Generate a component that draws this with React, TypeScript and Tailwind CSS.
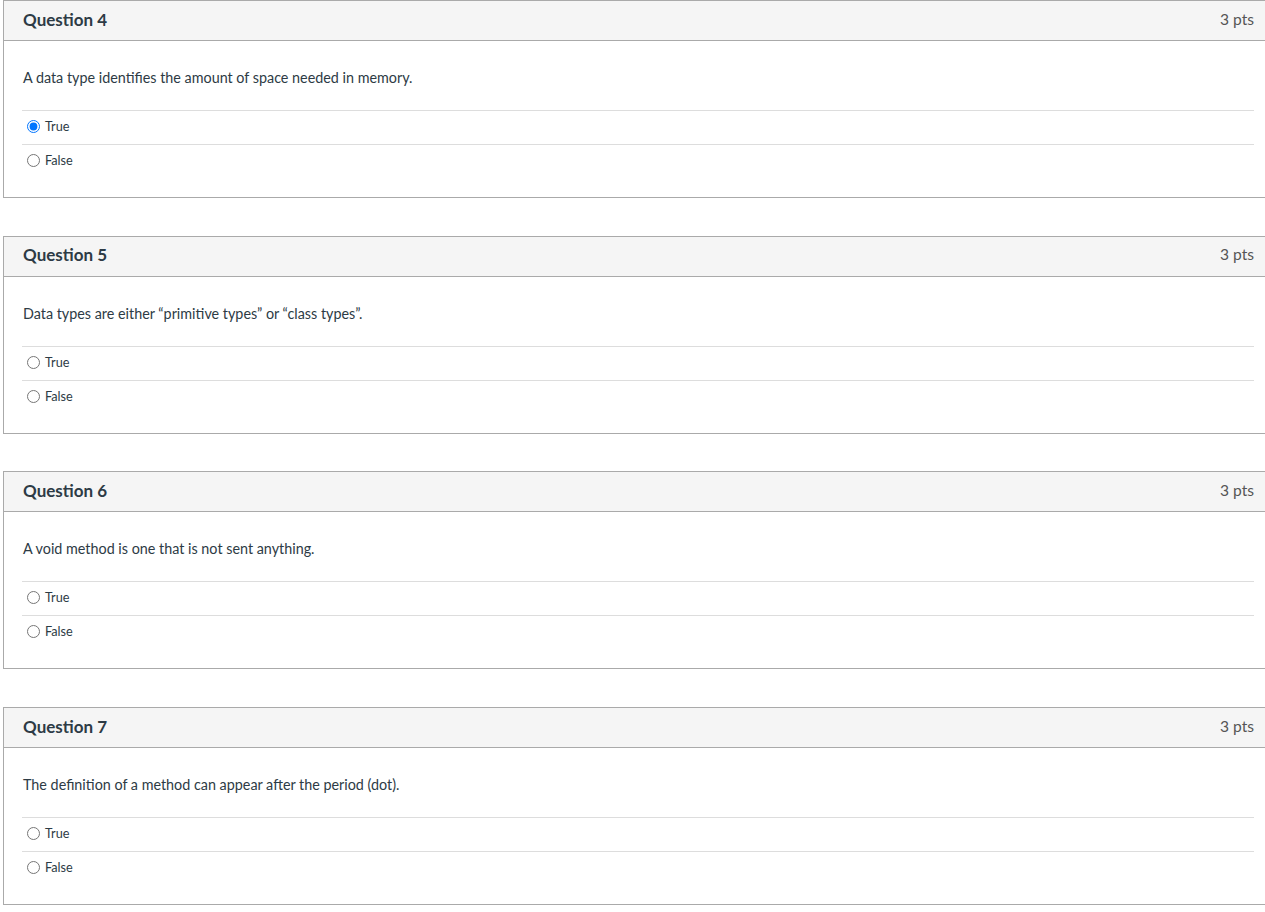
import React from "react";

type Q = { n: number; text: string; checked?: number };

const questions: Q[] = [
  { n: 4, text: "A data type identifies the amount of space needed in memory.", checked: 0 },
  { n: 5, text: "Data types are either \u201cprimitive types\u201d or \u201cclass types\u201d." },
  { n: 6, text: "A void method is one that is not sent anything." },
  { n: 7, text: "The definition of a method can appear after the period (dot)." },
];

function Card({ q }: { q: Q }) {
  return (
    <div className="ml-[3px] mb-[37.67px] border-l border-t border-b border-[#aaaaaa] bg-white">
      <div className="h-[40px] bg-[#f5f5f5] border-b border-[#aaaaaa] flex items-center justify-between pl-[19px] pr-[11px] pb-[2px]">
        <span className="text-[17px] font-bold text-[#2d3b45]">Question {q.n}</span>
        <span className="text-[15.6px] text-[#555555]">3 pts</span>
      </div>
      <div className="pl-[18px] pr-[11px] pt-[27px] pb-[19px]">
        <div className="text-[14.35px] leading-[20px] text-[#2d3b45] pl-[1px]">{q.text}</div>
        <div className="mt-[22px]">
          {["True", "False"].map((a, i) => (
            <label
              key={a}
              className="flex items-center h-[34px] border-t border-[#dddddd] text-[12.7px] text-[#2d3b45] pb-[2px]"
            >
              <input
                type="radio"
                name={"q" + q.n}
                defaultChecked={q.checked === i}
                className="ml-[5px] mr-[5px] w-[13px] h-[13px] m-0"
              />
              <span>{a}</span>
            </label>
          ))}
        </div>
      </div>
    </div>
  );
}

export default function App() {
  return (
    <div className="bg-white min-h-[912px]" style={{ fontFamily: "Lato, 'Helvetica Neue', Arial, sans-serif" }}>
      {questions.map((q) => (
        <Card key={q.n} q={q} />
      ))}
    </div>
  );
}
